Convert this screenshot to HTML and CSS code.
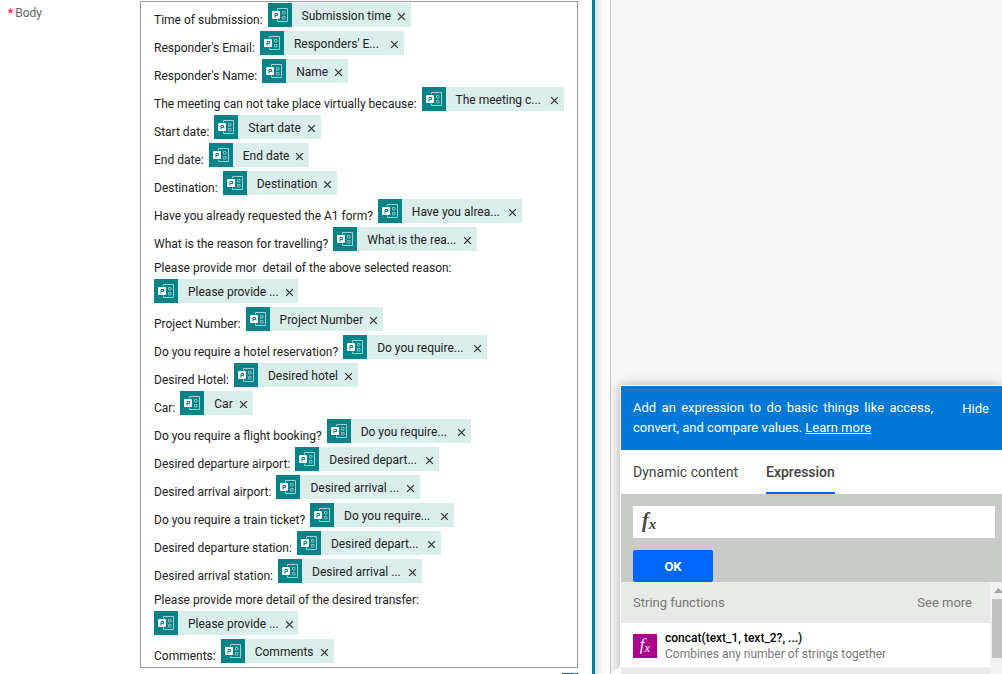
FILE: index.html
```html
<!DOCTYPE html>
<html lang="en">
<head>
  <meta charset="UTF-8" />
  <meta name="viewport" content="width=device-width, initial-scale=1" />
  <title>Send an email - Body</title>
  <link rel="stylesheet" href="styles.css">
</head>
<body>

<svg class="sprite" aria-hidden="true">
  <symbol id="forms" viewBox="0 0 24 24">
    <path d="M9.500 7.500v-2h10v13h-10v-2" fill="none" stroke="#9fd0d0" stroke-width="1"/>
    <path d="M14.500 8.500h2.500v2.500h-2.500zM14.500 13.500h2.500v2.500h-2.500z" fill="none" stroke="#7fbfc0" stroke-width="1"/>
    <rect x="4" y="8" width="8" height="8" rx="1" fill="#fff"/>
    <path d="M7 14.500v-4h2.500v2h-2.500" fill="none" stroke="#038387" stroke-width="1"/>
  </symbol>
  <symbol id="cross" viewBox="0 0 8 8">
    <path d="M1 1l6 6M7 1l-6 6" fill="none" stroke="#333" stroke-width="1.100"/>
  </symbol>
</svg>

<div class="page">
  <main class="card">
    <div class="field-name" id="bodyLabel"><span class="required">*</span>Body</div>
    <div class="field">
      <div class="editor" role="textbox" aria-multiline="true" aria-labelledby="bodyLabel">
        <div class="line"><span class="text">Time of submission:</span><span class="token"><svg class="token-icon"><use href="#forms"/></svg><span class="token-name">Submission time</span><button type="button" aria-label="Remove"><svg><use href="#cross"/></svg></button></span></div>
        <div class="line"><span class="text">Responder's Email:</span><span class="token cut"><svg class="token-icon"><use href="#forms"/></svg><span class="token-name">Responders' E...</span><button type="button" aria-label="Remove"><svg><use href="#cross"/></svg></button></span></div>
        <div class="line"><span class="text">Responder's Name:</span><span class="token"><svg class="token-icon"><use href="#forms"/></svg><span class="token-name">Name</span><button type="button" aria-label="Remove"><svg><use href="#cross"/></svg></button></span></div>
        <div class="line"><span class="text">The meeting can not take place virtually because:</span><span class="token cut"><svg class="token-icon"><use href="#forms"/></svg><span class="token-name">The meeting c...</span><button type="button" aria-label="Remove"><svg><use href="#cross"/></svg></button></span></div>
        <div class="line"><span class="text">Start date:</span><span class="token"><svg class="token-icon"><use href="#forms"/></svg><span class="token-name">Start date</span><button type="button" aria-label="Remove"><svg><use href="#cross"/></svg></button></span></div>
        <div class="line"><span class="text">End date:</span><span class="token"><svg class="token-icon"><use href="#forms"/></svg><span class="token-name">End date</span><button type="button" aria-label="Remove"><svg><use href="#cross"/></svg></button></span></div>
        <div class="line"><span class="text">Destination:</span><span class="token"><svg class="token-icon"><use href="#forms"/></svg><span class="token-name">Destination</span><button type="button" aria-label="Remove"><svg><use href="#cross"/></svg></button></span></div>
        <div class="line"><span class="text">Have you already requested the A1 form?</span><span class="token cut"><svg class="token-icon"><use href="#forms"/></svg><span class="token-name">Have you alrea...</span><button type="button" aria-label="Remove"><svg><use href="#cross"/></svg></button></span></div>
        <div class="line"><span class="text">What is the reason for travelling?</span><span class="token cut"><svg class="token-icon"><use href="#forms"/></svg><span class="token-name">What is the rea...</span><button type="button" aria-label="Remove"><svg><use href="#cross"/></svg></button></span></div>
        <div class="line plain"><span class="text">Please provide mor  detail of the above selected reason:</span></div>
        <div class="line"><span class="token cut"><svg class="token-icon"><use href="#forms"/></svg><span class="token-name">Please provide ...</span><button type="button" aria-label="Remove"><svg><use href="#cross"/></svg></button></span></div>
        <div class="line"><span class="text">Project Number:</span><span class="token"><svg class="token-icon"><use href="#forms"/></svg><span class="token-name">Project Number</span><button type="button" aria-label="Remove"><svg><use href="#cross"/></svg></button></span></div>
        <div class="line"><span class="text">Do you require a hotel reservation?</span><span class="token cut"><svg class="token-icon"><use href="#forms"/></svg><span class="token-name">Do you require...</span><button type="button" aria-label="Remove"><svg><use href="#cross"/></svg></button></span></div>
        <div class="line"><span class="text">Desired Hotel:</span><span class="token"><svg class="token-icon"><use href="#forms"/></svg><span class="token-name">Desired hotel</span><button type="button" aria-label="Remove"><svg><use href="#cross"/></svg></button></span></div>
        <div class="line"><span class="text">Car:</span><span class="token"><svg class="token-icon"><use href="#forms"/></svg><span class="token-name">Car</span><button type="button" aria-label="Remove"><svg><use href="#cross"/></svg></button></span></div>
        <div class="line"><span class="text">Do you require a flight booking?</span><span class="token cut"><svg class="token-icon"><use href="#forms"/></svg><span class="token-name">Do you require...</span><button type="button" aria-label="Remove"><svg><use href="#cross"/></svg></button></span></div>
        <div class="line"><span class="text">Desired departure airport:</span><span class="token cut"><svg class="token-icon"><use href="#forms"/></svg><span class="token-name">Desired depart...</span><button type="button" aria-label="Remove"><svg><use href="#cross"/></svg></button></span></div>
        <div class="line"><span class="text">Desired arrival airport:</span><span class="token cut"><svg class="token-icon"><use href="#forms"/></svg><span class="token-name">Desired arrival ...</span><button type="button" aria-label="Remove"><svg><use href="#cross"/></svg></button></span></div>
        <div class="line"><span class="text">Do you require a train ticket?</span><span class="token cut"><svg class="token-icon"><use href="#forms"/></svg><span class="token-name">Do you require...</span><button type="button" aria-label="Remove"><svg><use href="#cross"/></svg></button></span></div>
        <div class="line"><span class="text">Desired departure station:</span><span class="token cut"><svg class="token-icon"><use href="#forms"/></svg><span class="token-name">Desired depart...</span><button type="button" aria-label="Remove"><svg><use href="#cross"/></svg></button></span></div>
        <div class="line"><span class="text">Desired arrival station:</span><span class="token cut"><svg class="token-icon"><use href="#forms"/></svg><span class="token-name">Desired arrival ...</span><button type="button" aria-label="Remove"><svg><use href="#cross"/></svg></button></span></div>
        <div class="line plain"><span class="text">Please provide more detail of the desired transfer:</span></div>
        <div class="line"><span class="token cut"><svg class="token-icon"><use href="#forms"/></svg><span class="token-name">Please provide ...</span><button type="button" aria-label="Remove"><svg><use href="#cross"/></svg></button></span></div>
        <div class="line"><span class="text">Comments:</span><span class="token"><svg class="token-icon"><use href="#forms"/></svg><span class="token-name">Comments</span><button type="button" aria-label="Remove"><svg><use href="#cross"/></svg></button></span></div>
      </div>
      <button type="button" class="add" aria-label="Add dynamic content">
        <svg viewBox="0 0 16 12"><path d="M0 0h12v12h-12zM13 0h3v12h-3z" fill="#1b5a9c"/></svg>
      </button>
    </div>
  </main>

  <div class="gutter"></div>

  <aside class="side">
    <section class="popup">
      <div class="banner">
        <p>Add an expression to do basic things like access, convert, and compare values. <a href="#">Learn more</a></p>
        <button type="button">Hide</button>
      </div>

      <div class="tabs" role="tablist">
        <button type="button" role="tab" aria-selected="false">Dynamic content</button>
        <button type="button" role="tab" aria-selected="true" class="active">Expression</button>
      </div>

      <form class="expression">
        <label class="formula">
          <span class="fx">f<sub>x</sub></span>
          <input type="text" aria-label="Expression" />
        </label>
        <button type="button" class="ok">OK</button>
      </form>

      <div class="functions">
        <div class="list">
          <div class="group"><span>String functions</span><a href="#">See more</a></div>
          <div class="function">
            <span class="fx">f<sub>x</sub></span>
            <div>
              <div class="signature">concat(text_1, text_2?, ...)</div>
              <div class="description">Combines any number of strings together</div>
            </div>
          </div>
        </div>
        <div class="scrollbar">
          <svg viewBox="0 0 17 17"><path d="M4 11h9l-4.500-5z" fill="#a3a3a3"/></svg>
          <div class="thumb"></div>
        </div>
      </div>
    </section>
    <svg class="pointer" viewBox="0 0 10 8"><path d="M0 8L10 0v8z" fill="#fff"/></svg>
  </aside>
</div>

</body>
</html>
```
FILE: styles.css
```css
* {
  box-sizing: border-box;
}

body {
  margin: 0;
  font-family: "Segoe UI", Roboto, "Open Sans", sans-serif;
  font-size: 12px;
  color: #222;
  background: #fff;
}

button, input {
  font: inherit;
  border: none;
  padding: 0;
  background: none;
}

.sprite {
  display: none;
}

.page {
  display: grid;
  grid-template-columns: 595fr 16px 391fr;
  height: 100vh;
  overflow: hidden;
}

/* action card */
.card {
  display: grid;
  grid-template-columns: 140px minmax(0, 1fr);
  padding-right: 14px;
  border-right: 3px solid #00829b;
  overflow: hidden;
}
.field-name {
  padding: 4px 8px;
  line-height: 18px;
  color: #666;
}
.required {
  margin-right: 2px;
  color: #e81123;
}
.field {
  padding-top: 1px;
}
.editor {
  padding: 1px 13px 0;
  border: 1px solid #999;
}
.line {
  display: flex;
  align-items: flex-start;
  gap: 5px;
  height: 28px;
}
.line.plain {
  height: 24px;
}
.text {
  padding-top: 8px;
  line-height: 18px;
  white-space: pre;
}
.plain .text {
  padding-top: 4px;
}
.token {
  display: flex;
  align-items: center;
  height: 24px;
  background: #d9edeb;
}
.token.cut {
  width: 144px;
}
.token-icon {
  flex: none;
  width: 24px;
  height: 24px;
  background: #038387;
}
.token-name {
  flex: 1;
  padding: 1px 1px 0 10px;
  line-height: 24px;
  white-space: nowrap;
}
.token button {
  display: flex;
  padding: 2px 5px 0;
}
.token button svg {
  width: 9px;
  height: 9px;
}
.add {
  display: block;
  margin: 5px 0 0 auto;
}
.add svg {
  display: block;
  width: 16px;
  height: 12px;
}

.gutter {
  border-right: 1px solid #c6c6c6;
  background: linear-gradient(to right, #dedede, #f8f8f8 7px, #fff);
}

/* expression popup */
.side {
  position: relative;
  display: flex;
  align-items: flex-end;
  padding-left: 10px;
  background: #f7f7f7;
  overflow: hidden;
}
.popup {
  flex: 1;
  min-width: 0;
  background: #fff;
  box-shadow: 0 0 0 1px #fff, 0 0 12px rgba(0,0,0,0.35);
}
.pointer {
  position: absolute;
  left: 0;
  bottom: 0;
  width: 10px;
  height: 8px;
}
.banner {
  display: flex;
  justify-content: space-between;
  align-items: flex-start;
  height: 64px;
  padding: 12px 13px 12px 12px;
  font-size: 13px;
  line-height: 20px;
  color: #fff;
  background: #0078d7;
}
.banner p {
  width: 300px;
  margin: 0;
  text-align: justify;
}
.banner a {
  color: #fff;
}
.banner button {
  padding-top: 1px;
  line-height: 20px;
  color: #fff;
}
.tabs {
  display: flex;
  gap: 28px;
  height: 44px;
  padding-left: 12px;
  font-size: 14px;
}
.tabs button {
  padding-top: 1px;
  color: #444;
  border-bottom: 2px solid transparent;
}
.tabs .active {
  font-weight: 500;
  border-color: #0066ff;
}
.expression {
  padding: 12px 7px 0 12px;
  background: #c8cac7;
}
.formula {
  display: flex;
  height: 32px;
  margin-bottom: 12px;
  background: #fff;
}
.formula input {
  flex: 1;
  min-width: 0;
  outline: none;
}
.fx {
  font-family: "Liberation Serif", serif;
  font-style: italic;
}
.fx sub {
  font-size: 75%;
  vertical-align: -2px;
}
.formula .fx {
  width: 32px;
  padding-left: 9px;
  font-size: 20px;
  font-weight: 700;
  line-height: 28px;
  color: #444;
}
.ok {
  display: block;
  width: 80px;
  height: 32px;
  font-size: 13px;
  font-weight: 700;
  color: #fff;
  background: #0066ff;
  border-radius: 2px;
}
.functions {
  display: flex;
  height: 92px;
  overflow: hidden;
}
.list {
  flex: 1;
  background: #e8eae7;
}
.group {
  display: flex;
  justify-content: space-between;
  padding: 1px 18px 0 12px;
  font-size: 13px;
  line-height: 40px;
  color: #777;
}
.group a {
  color: #777;
  text-decoration: none;
}
.function {
  display: flex;
  align-items: center;
  gap: 8px;
  height: 44px;
  padding: 1px 12px 0;
  line-height: 16px;
  background: #fff;
}
.function .fx {
  width: 24px;
  height: 24px;
  font-size: 17px;
  line-height: 22px;
  text-align: center;
  color: #fff;
  background: #ad008c;
}
.signature {
  font-weight: 500;
  color: #000;
}
.description {
  color: #777;
}
.scrollbar {
  width: 17px;
  margin-right: -5px;
  background: #f1f1f1;
}
.scrollbar svg {
  display: block;
  width: 17px;
  height: 17px;
}
.thumb {
  height: 59px;
  margin: 0 2px;
  background: #c1c1c1;
}
```
